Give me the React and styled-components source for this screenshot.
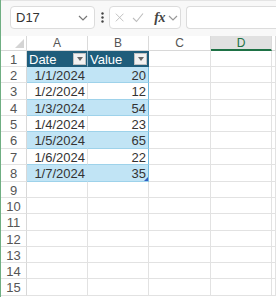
import React from "react";
import styled, { createGlobalStyle } from "styled-components";

const Global = createGlobalStyle`
  html, body { margin: 0; padding: 0; background: #fff; overflow: hidden; }
  body { font-family: "Liberation Sans", Arial, sans-serif; }
  * { box-sizing: border-box; }
`;

const Window = styled.div`
  width: 276px;
  height: 297px;
  border-left: 1px solid #6fae82;
  overflow: hidden;
  background: #fff;
`;

const Bar = styled.div`
  height: 36px;
  display: flex;
  align-items: flex-start;
  padding: 5px 0 0 9px;
  background: #f8f8f8;
  border-top: 1px solid #e4e4e4;
`;

const Box = styled.div`
  height: 23px;
  background: #fff;
  border: 1px solid #dcdcdc;
  border-radius: 4px;
  display: flex;
  align-items: center;
  width: ${(p) => p.$w};
  padding: ${(p) => p.$pad || "0"};
  margin-left: ${(p) => p.$ml || "0"};
  flex-shrink: 0;
  ${(p) => (p.$open ? "border-right: none; border-radius: 4px 0 0 4px;" : "")}
`;

const NameText = styled.span`
  flex: 1;
  font-size: 13px;
  color: #333;
`;

const Dots = styled.div`
  width: 18px;
  height: 23px;
  display: flex;
  align-items: center;
  justify-content: center;
`;

const Fx = styled.span`
  font-family: "Liberation Serif", "Times New Roman", serif;
  font-style: italic;
  font-weight: bold;
  font-size: 14px;
  color: #444;
  margin-left: 10px;
  letter-spacing: -0.5px;
`;

const IconSlot = styled.span`
  display: flex;
  margin-left: ${(p) => p.$ml || 0}px;
`;

const Sheet = styled.div`
  display: grid;
  grid-template-columns: 26px 61px 61px 62px 61px 1fr;
`;

const Corner = styled.div`
  height: 15px;
  border-right: 1px solid #d8d8d8;
  border-bottom: 1px solid #d8d8d8;
  position: relative;
  &::after {
    content: "";
    position: absolute;
    right: 2px;
    bottom: 2px;
    width: 0;
    height: 0;
    border-left: 9px solid transparent;
    border-bottom: 9px solid #d4d4d4;
  }
`;

const ColHead = styled.div`
  height: 15px;
  display: flex;
  align-items: center;
  justify-content: center;
  font-size: 12px;
  color: ${(p) => (p.$sel ? "#1e7145" : "#555")};
  background: ${(p) => (p.$sel ? "#e1e1e1" : "#fff")};
  border-right: 1px solid #dadada;
  border-bottom: ${(p) => (p.$sel ? "2px solid #1e7145" : "1px solid #d8d8d8")};
`;

const RowHead = styled.div`
  height: ${(p) => p.$h}px;
  display: flex;
  align-items: center;
  justify-content: center;
  font-size: 13px;
  color: #555;
  border-right: 1px solid #d8d8d8;
  border-bottom: 1px solid #e2e2e2;
  padding-top: 1px;
`;

const Cell = styled.div`
  height: ${(p) => p.$h}px;
  border-right: 1px solid #e2e2e2;
  border-bottom: 1px solid #e2e2e2;
`;

const HeadCell = styled.div`
  height: ${(p) => p.$h}px;
  background: #1f5d7b;
  color: #fff;
  font-size: 13px;
  display: flex;
  align-items: center;
  justify-content: space-between;
  padding: 1px 1px 0 2px;
  border-right: 1px solid ${(p) => (p.$last ? "#1f5d7b" : "#8ab4c9")};
  border-bottom: 1px solid #1f5d7b;
`;

const FilterBtn = styled.span`
  width: 13px;
  height: 12px;
  background: #f2f2f2;
  border: 1px solid #c2c2c2;
  display: flex;
  align-items: center;
  justify-content: center;
  &::after {
    content: "";
    width: 0;
    height: 0;
    border-left: 3.5px solid transparent;
    border-right: 3.5px solid transparent;
    border-top: 4px solid #666;
  }
`;

const DataCell = styled.div`
  height: ${(p) => p.$h}px;
  background: ${(p) => (p.$band ? "#c1e4f5" : "#fff")};
  color: #333;
  font-size: 13px;
  display: flex;
  align-items: center;
  justify-content: flex-end;
  padding: 1px 2px 0 0;
  border-bottom: 1px solid #9ed2ea;
  border-right: 1px solid ${(p) => (p.$last ? "#6fb9de" : p.$band ? "#c1e4f5" : "#e2e2e2")};
  position: relative;
  ${(p) =>
    p.$corner
      ? `&::after { content: ""; position: absolute; right: 0; bottom: 0; width: 0; height: 0;
         border-left: 4px solid transparent; border-bottom: 4px solid #2f5fc4; }`
      : ""}
`;

const heights = [16, 16, 17, 16, 16, 17, 16, 17, 16, 16, 17, 16, 16, 16, 17];
const data = [
  ["1/1/2024", 20],
  ["1/2/2024", 12],
  ["1/3/2024", 54],
  ["1/4/2024", 23],
  ["1/5/2024", 65],
  ["1/6/2024", 22],
  ["1/7/2024", 35],
];

const Chevron = ({ color = "#777" }) => (
  <svg width="10" height="6" viewBox="0 0 10 6">
    <path d="M1 1 L5 5 L9 1" fill="none" stroke={color} strokeWidth="1.2" />
  </svg>
);

export default function App() {
  const rows = [];
  heights.forEach((h, i) => {
    const r = i + 1;
    rows.push(<RowHead key={`h${r}`} $h={h}>{r}</RowHead>);
    if (r === 1) {
      rows.push(
        <HeadCell key="a1" $h={h}>
          <span>Date</span>
          <FilterBtn />
        </HeadCell>,
        <HeadCell key="b1" $h={h} $last>
          <span>Value</span>
          <FilterBtn />
        </HeadCell>
      );
    } else if (r <= 8) {
      const [d, v] = data[r - 2];
      const band = r % 2 === 0;
      rows.push(
        <DataCell key={`a${r}`} $h={h} $band={band}>{d}</DataCell>,
        <DataCell key={`b${r}`} $h={h} $band={band} $last $corner={r === 8}>{v}</DataCell>
      );
    } else {
      rows.push(<Cell key={`a${r}`} $h={h} />, <Cell key={`b${r}`} $h={h} />);
    }
    rows.push(<Cell key={`c${r}`} $h={h} />, <Cell key={`d${r}`} $h={h} />, <Cell key={`e${r}`} $h={h} />);
  });

  return (
    <Window>
      <Global />
      <Bar>
        <Box $w="85px" $pad="0 6px 0 5px">
          <NameText>D17</NameText>
          <Chevron />
        </Box>
        <Dots>
          <svg width="3" height="11" viewBox="0 0 3 11">
            <circle cx="1.5" cy="1.5" r="1.2" fill="#444" />
            <circle cx="1.5" cy="5.5" r="1.2" fill="#444" />
            <circle cx="1.5" cy="9.5" r="1.2" fill="#444" />
          </svg>
        </Dots>
        <Box $w="72px" $pad="0 2px 0 5px">
          <svg width="11" height="11" viewBox="0 0 11 11">
            <path d="M1 1 L10 10 M10 1 L1 10" stroke="#bdbdbd" strokeWidth="1.1" fill="none" />
          </svg>
          <IconSlot $ml={8}>
            <svg width="12" height="11" viewBox="0 0 12 11">
              <path d="M1 6 L4.5 9.5 L11 1.5" stroke="#bdbdbd" strokeWidth="1.1" fill="none" />
            </svg>
          </IconSlot>
          <Fx>fx</Fx>
          <IconSlot $ml={3}>
            <Chevron color="#999" />
          </IconSlot>
        </Box>
        <Box $w="90px" $ml="5px" $open />
      </Bar>
      <Sheet>
        <Corner />
        <ColHead>A</ColHead>
        <ColHead>B</ColHead>
        <ColHead>C</ColHead>
        <ColHead $sel>D</ColHead>
        <ColHead />
        {rows}
      </Sheet>
    </Window>
  );
}
